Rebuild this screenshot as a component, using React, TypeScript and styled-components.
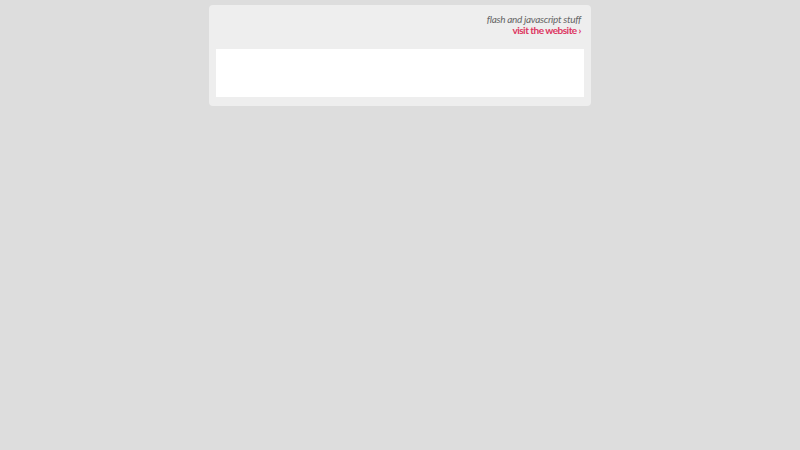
import React from "react";
import styled, { createGlobalStyle } from "styled-components";

const Global = createGlobalStyle`
  html, body { margin: 0; padding: 0; background: #dddddd; }
  body { font-family: "Lato", "Open Sans", sans-serif; }
`;

const Page = styled.div`
  display: flex;
  justify-content: center;
  padding-top: 5px;
`;

const Card = styled.div`
  width: 382px;
  box-sizing: border-box;
  background: #eeeeee;
  border-radius: 4px;
  padding: 0 7px 9px 7px;
`;

const Header = styled.div`
  height: 44px;
  box-sizing: border-box;
  padding: 9px 3px 0 0;
  display: flex;
  flex-direction: column;
  align-items: flex-end;
  font-size: 10px;
  line-height: 11px;
`;

const Tagline = styled.span`
  color: #666666;
  font-style: italic;
  letter-spacing: -0.3px;
`;

const Link = styled.a`
  color: #dd3560;
  font-weight: 700;
  letter-spacing: -0.5px;
  text-decoration: none;
`;

const Content = styled.div`
  height: 48px;
  background: #ffffff;
`;

export default function App() {
  return (
    <>
      <Global />
      <Page>
        <Card>
          <Header>
            <Tagline>flash and javascript stuff</Tagline>
            <Link href="#">visit the website ›</Link>
          </Header>
          <Content />
        </Card>
      </Page>
    </>
  );
}
